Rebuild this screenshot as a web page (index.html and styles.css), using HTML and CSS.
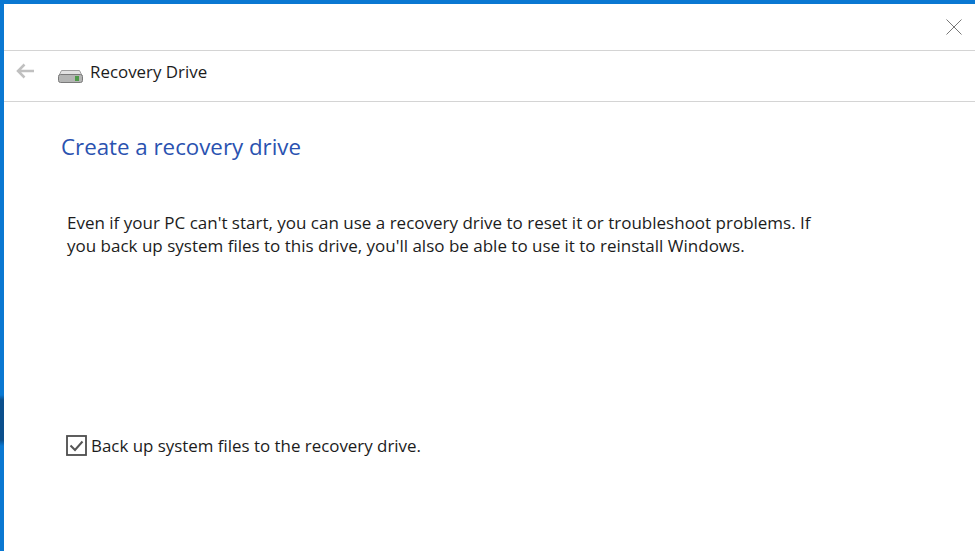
FILE: index.html

```html
<!DOCTYPE html>
<html>
<head>
    <meta charset="UTF-8">
    <title>Recovery Drive</title>
    <link rel="stylesheet" href="styles.css">
</head>
<body>
    <div class="window">
        <div class="title-bar">
            <svg class="close" width="16" height="16" viewBox="0 0 16 16">
                <path d="M.5.5l15 15M15.500.5l-15 15" stroke="#777" fill="none"/>
            </svg>
        </div>
        <div class="nav-bar">
            <svg class="back" width="20" height="16" viewBox="0 0 20 16">
                <path d="M19 8H3M9.500 1.500L3 8l6.500 6.500" stroke="#c0c0c0" stroke-width="2.500" fill="none"/>
            </svg>
            <svg class="drive" width="25" height="14" viewBox="0 0 25 14">
                <path d="M3.500 1.500h18l2.500 5H1z" fill="#e2e2e2" stroke="#a0a0a0"/>
                <rect x=".5" y="5.500" width="24" height="8" rx="2" fill="#b4b5b4" stroke="#7a7a7a"/>
                <rect x="17" y="7" width="4" height="5" fill="#4f9a4a"/>
            </svg>
            <span class="nav-title">Recovery Drive</span>
        </div>
        <div class="content">
            <h1 class="heading">Create a recovery drive</h1>
            <p class="description">Even if your PC can't start, you can use a recovery drive to reset it or troubleshoot problems. If you back up system files to this drive, you'll also be able to use it to reinstall Windows.</p>
            <label class="option">
                <svg class="checkbox" width="21" height="21" viewBox="0 0 21 21">
                    <rect x="1" y="1" width="19" height="19" fill="#fff" stroke="#4d4d4d" stroke-width="1.800"/>
                    <path d="M4.500 10.500l4.500 4.500 7.500-8.500" stroke="#555" stroke-width="2" fill="none"/>
                </svg>
                <span>Back up system files to the recovery drive.</span>
            </label>
        </div>
    </div>
</body>
</html>
```

FILE: styles.css

```css
html, body {
    height: 100%;
}
body {
    margin: 0;
    overflow: hidden;
    background: linear-gradient(#0a78d2 395px, #0b4f8c 400px, #0b4f8c 440px, #0a78d2 446px);
    font-family: "Open Sans", "Noto Sans", sans-serif;
    color: #1c1c1c;
}
.window {
    height: 547px;
    margin: 4px 0 0 4px;
    background: #fff;
}
.title-bar {
    height: 46px;
    display: flex;
    justify-content: flex-end;
    align-items: flex-start;
    border-bottom: 1px solid #d4d4d4;
}
.close {
    margin: 15px 13px 0 0;
}
.nav-bar {
    height: 50px;
    display: flex;
    align-items: center;
    border-bottom: 1px solid #d4d4d4;
}
.back {
    margin: 0 0 10px 11px;
}
.drive {
    margin: 0 0 0 23px;
}
.nav-title {
    margin: 0 0 10px 7px;
    font-size: 16.900px;
}
.content {
    padding: 30px 0 0 57px;
}
.heading {
    margin: 0;
    font-size: 22.300px;
    font-weight: 400;
    line-height: 30px;
    color: #2a52b0;
}
.description {
    width: 745px;
    margin: 49px 0 0 6px;
    font-size: 17px;
    line-height: 23px;
}
.option {
    display: flex;
    align-items: center;
    gap: 4px;
    margin: 177px 0 0 5px;
    font-size: 16.900px;
}
```
